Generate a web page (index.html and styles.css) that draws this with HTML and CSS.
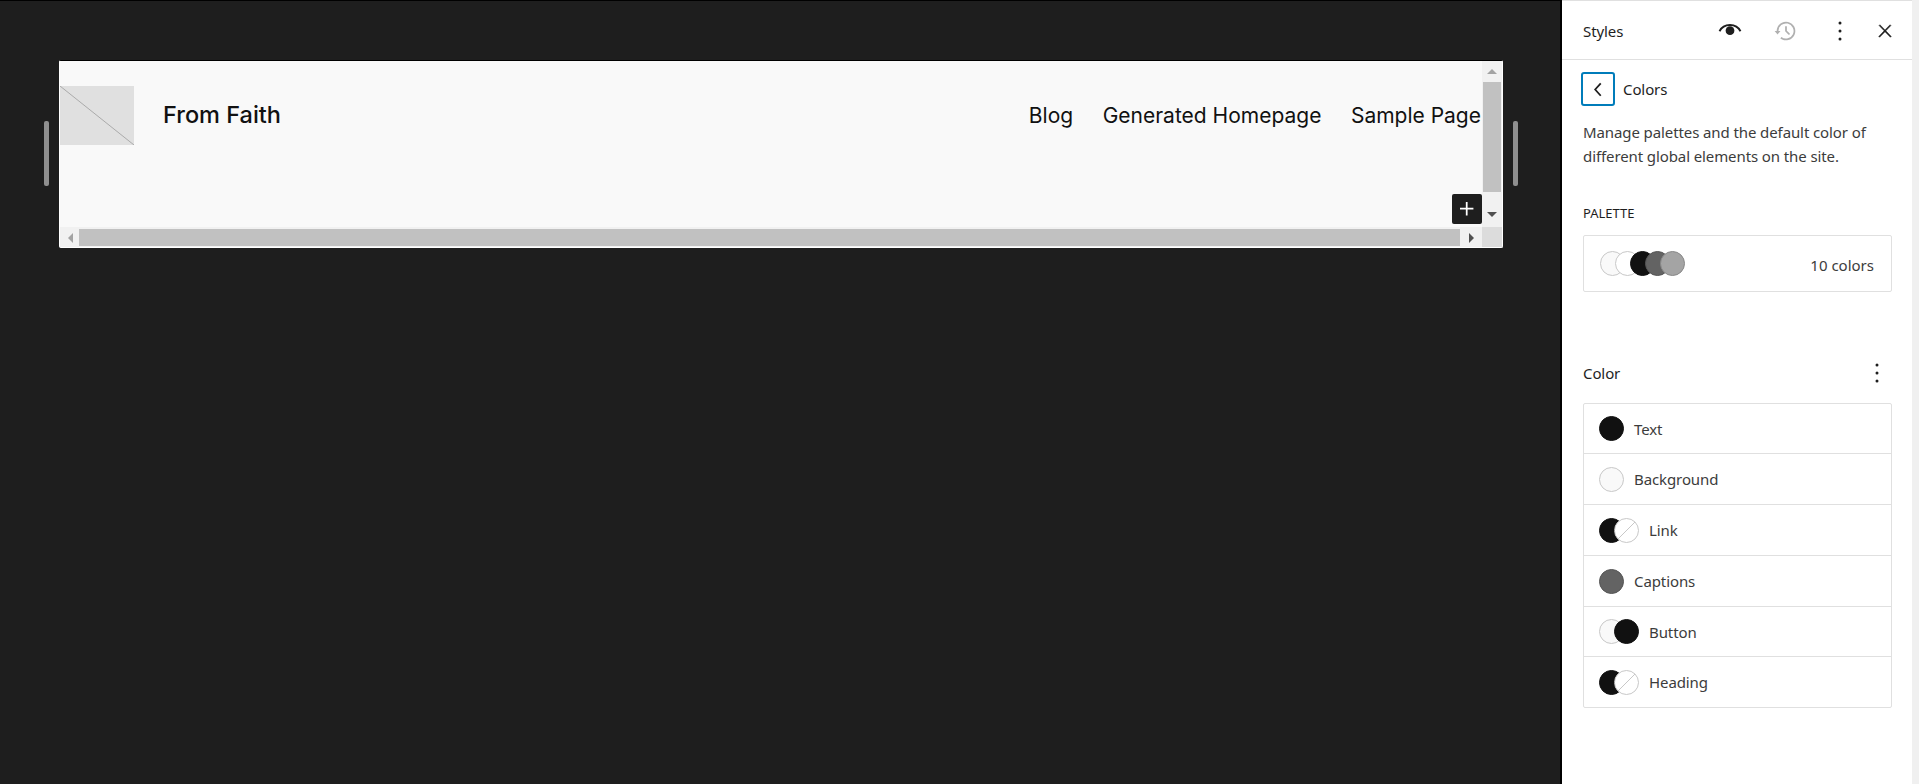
FILE: index.html
```html
<!DOCTYPE html>
<html lang="en">
<head>
<meta charset="utf-8">
<title>Styles - Colors</title>
<link rel="stylesheet" href="styles.css">
</head>
<body>
<div class="app">
  <main class="canvas">
    <span class="handle"></span>
    <section class="frame">
      <div class="viewport">
        <header class="site-header">
          <div class="brand">
            <svg class="logo" viewBox="0 0 74 59" preserveAspectRatio="none"><line x1="0" y1="0" x2="74" y2="59"/></svg>
            <span class="site-title">From Faith</span>
          </div>
          <nav class="site-nav"><a>Blog</a><a>Generated Homepage</a><a>Sample Page</a></nav>
        </header>
        <button class="inserter" aria-label="Add block"><svg viewBox="0 0 24 24"><path d="M11 12.5V17.5H12.5V12.5H17.5V11H12.5V6H11V11H6V12.5H11Z"/></svg></button>
      </div>
      <div class="vbar">
        <span class="arrow up"></span>
        <span class="vthumb"></span>
        <span class="arrow down"></span>
      </div>
      <div class="hbar">
        <span class="arrow left"></span>
        <span class="hthumb"></span>
        <span class="arrow right"></span>
      </div>
      <div class="corner"></div>
    </section>
    <span class="handle"></span>
  </main>
  <aside class="panel">
    <div class="panel-main">
      <div class="panel-head">
        <h2 class="panel-title">Styles</h2>
        <div class="head-icons">
          <svg class="ico eye" viewBox="0 0 24 24"><path class="eye-arc" d="M3.6 13C4.6 11 7.4 8 12 8s7.4 3 8.4 5"/><circle cx="12" cy="12.5" r="3.5"/></svg>
          <svg class="ico hist" viewBox="0 0 24 24"><path d="M5.5 12h1.75l-2.5 3-2.5-3H4a8 8 0 113.134 6.35l.907-1.194A6.5 6.5 0 105.5 12zm9.53 1.97l-2.28-2.28V8.5a.75.75 0 00-1.5 0V12a.747.747 0 00.218.529l2.5 2.5a.75.75 0 101.06-1.061z"/></svg>
          <svg class="ico dots" viewBox="0 0 24 24"><circle cx="12" cy="4" r="1.5"/><circle cx="12" cy="12" r="1.5"/><circle cx="12" cy="20" r="1.5"/></svg>
          <svg class="ico close" viewBox="0 0 24 24"><path d="M13 11.8l6.1-6.3-1-1-6.1 6.2-6.1-6.2-1 1 6.1 6.3-6.5 6.7 1 1 6.5-6.6 6.5 6.6 1-1z"/></svg>
        </div>
      </div>
      <div class="nav-row">
        <button class="back" aria-label="Back"><svg viewBox="0 0 24 24"><path d="M14.6 7l-1.2-1L8 12l5.4 6 1.2-1-4.6-5z"/></svg></button>
        <span class="nav-title">Colors</span>
      </div>
      <p class="desc">Manage palettes and the default color of different global elements on the site.</p>
      <h3 class="label">PALETTE</h3>
      <div class="palette">
        <div class="stack">
          <span class="dot c-bg"></span><span class="dot c-white"></span><span class="dot c-black"></span><span class="dot c-mid"></span><span class="dot c-light"></span>
        </div>
        <span class="count">10 colors</span>
      </div>
      <div class="color-head">
        <span>Color</span>
        <svg class="ico dots" viewBox="0 0 24 24"><circle cx="12" cy="4" r="1.5"/><circle cx="12" cy="12" r="1.5"/><circle cx="12" cy="20" r="1.5"/></svg>
      </div>
      <ul class="list">
        <li><span class="stack"><span class="dot c-black"></span></span>Text</li>
        <li><span class="stack"><span class="dot c-bg"></span></span>Background</li>
        <li><span class="stack"><span class="dot c-black"></span><span class="dot c-none"></span></span>Link</li>
        <li><span class="stack"><span class="dot c-mid"></span></span>Captions</li>
        <li><span class="stack"><span class="dot c-bg"></span><span class="dot c-black"></span></span>Button</li>
        <li><span class="stack"><span class="dot c-black"></span><span class="dot c-none"></span></span>Heading</li>
      </ul>
    </div>
    <div class="panel-gutter"></div>
  </aside>
</div>
</body>
</html>
```
FILE: styles.css
```css
* { box-sizing: border-box; }
html, body { margin: 0; height: 100%; overflow: hidden; }
body { font-family: "Noto Sans", "Open Sans", sans-serif; color: #1e1e1e; background: #1e1e1e; }
h2, h3, p, ul { margin: 0; padding: 0; font-weight: 400; }
button { padding: 0; margin: 0; font: inherit; }

.app { display: flex; height: 784px; }

/* canvas */
.canvas {
  width: 1562px; flex: none; background: #1e1e1e;
  border-top: 1px solid #000; border-right: 2px solid #000;
  display: flex; align-items: flex-start; gap: 10px;
  padding: 59px 0 0 44px;
}
.handle { width: 5px; height: 65px; margin-top: 61px; background: #8f8f8f; border-radius: 2px; flex: none; }
.frame {
  width: 1444px; height: 188px; flex: none;
  display: grid; grid-template-columns: 1fr 20px; grid-template-rows: 1fr 20px;
  background: #f9f9f9; border: 1px solid #fff; border-top-color: #000; border-radius: 2px;
}
.viewport { position: relative; overflow: hidden; background: #f9f9f9; }
.site-header { display: flex; justify-content: space-between; align-items: flex-start; padding: 25px 1px 0 0; }
.brand { display: flex; align-items: center; gap: 29px; }
.logo { width: 74px; height: 59px; background: #e0e0e0; display: block; }
.logo line { stroke: #aaa; stroke-width: 1; vector-effect: non-scaling-stroke; }
.site-title { font: 500 23.5px/1 Inter, sans-serif; color: #111; margin-top: -1px; }
.site-nav { display: flex; gap: 29.5px; font: 400 21px/30px Inter, sans-serif; color: #111; margin-top: 15px; }
.inserter {
  position: absolute; right: 0; bottom: 3px; width: 30px; height: 30px;
  background: #1e1e1e; border: 0; border-radius: 2px; display: flex; align-items: center; justify-content: center;
}
.inserter svg { width: 28px; height: 28px; fill: #fff; }

.vbar { background: #f1f1f1; display: flex; flex-direction: column; align-items: center; padding: 0 1px; }
.vthumb { width: 100%; height: 110px; background: #c1c1c1; flex: none; }
.hbar { background: #f1f1f1; display: flex; align-items: center; padding: 2px 0 1px; grid-column: 1; }
.hthumb { flex: 1; height: 100%; background: #c1c1c1; }
.corner { background: #dcdcdc; }
.arrow { flex: none; display: flex; width: 0; height: 0; border: 0 solid transparent; }
.arrow.up { border-width: 0 5px 5px; border-bottom-color: #a3a3a3; margin: 8px 0 8px; }
.arrow.down { border-width: 5px 5px 0; border-top-color: #505050; margin-top: 20px; }
.arrow.left { border-width: 5px 5px 5px 0; border-right-color: #a3a3a3; margin: 0 6px 0 8px; }
.arrow.right { border-width: 5px 0 5px 5px; border-left-color: #505050; margin: 0 8px 0 9px; }

/* sidebar */
.panel { flex: 1; display: flex; min-width: 0; background: #fff; }
.panel-main { width: 350px; flex: none; border-top: 1px solid #e0e0e0; }
.panel-gutter { flex: 1; background: #f0f0f0; }
.panel-head {
  height: 59px; display: flex; align-items: center; justify-content: space-between;
  padding: 1px 17px 0 21px; border-bottom: 1px solid #e0e0e0;
}
.panel-title { font-size: 15px; letter-spacing: -.1px; color: #1e1e1e; }
.head-icons { display: flex; align-items: center; }
.ico { display: block; width: 24px; height: 24px; fill: #1e1e1e; flex: none; }
.eye { width: 30px; height: 30px; margin-right: 27px; margin-top: -2px; }
.eye-arc { fill: none; stroke: #1e1e1e; stroke-width: 1.5; }
.hist { width: 28px; height: 28px; fill: #b0b0b0; margin-right: 28px; }
.head-icons .dots { margin-right: 23px; }
.close { width: 20px; height: 20px; stroke: #1e1e1e; stroke-width: .6; }

.nav-row { display: flex; align-items: center; gap: 8px; padding: 12px 0 0 19px; }
.back {
  width: 34px; height: 34px; border: 2px solid #007cba; border-radius: 3px; background: #fff;
  display: flex; align-items: center; justify-content: center;
}
.back svg { width: 27px; height: 27px; fill: #1e1e1e; flex: none; }
.nav-title { font-size: 15px; letter-spacing: -.1px; }
.desc { font-size: 15px; letter-spacing: -.1px; line-height: 24px; color: #3c3c3c; padding: 14px 10px 0 21px; }

.label { font-size: 13px; line-height: 16px; padding: 37px 0 0 21px; }
.palette {
  margin: 14px 0 0 21px; width: 309px; height: 57px; border: 1px solid #e0e0e0; border-radius: 2px;
  display: flex; align-items: center; justify-content: space-between; padding: 0 17px 0 16px;
}
.count { font-size: 15px; letter-spacing: 0; color: #3c3c3c; padding-top: 2px; }
.stack { display: flex; flex: none; }
.dot { width: 25px; height: 25px; border-radius: 50%; border: 1px solid #c8c8c8; flex: none; }
.dot + .dot { margin-left: -10px; }
.c-bg { background: #f9f9f9; }
.c-white { background: #fff; }
.c-black { background: #111; border-color: #111; }
.c-mid { background: #636363; border-color: #555; }
.c-light { background: #a4a4a4; border-color: #888; }
.c-none {
  background: linear-gradient(135deg, #fff calc(50% - .6px), #c8c8c8 calc(50% - .6px), #c8c8c8 calc(50% + .6px), #fff calc(50% + .6px));
}

.color-head {
  display: flex; align-items: center; justify-content: space-between;
  font-size: 15px; letter-spacing: -.1px; margin: 69px 0 0 21px; width: 306px; height: 24px;
}
.list {
  list-style: none; margin: 18px 0 0 21px; width: 309px; height: 305px;
  display: grid; grid-template-rows: 50px 51px 51px 51px 50px 50px;
  border: 1px solid #e0e0e0; border-radius: 2px;
}
.list li {
  display: flex; align-items: center; gap: 10px; padding: 0 0 0 15px;
  font-size: 15px; letter-spacing: -.1px; color: #3c3c3c; border-bottom: 1px solid #e0e0e0;
}
.list li:last-child { border-bottom: 0; }
```
